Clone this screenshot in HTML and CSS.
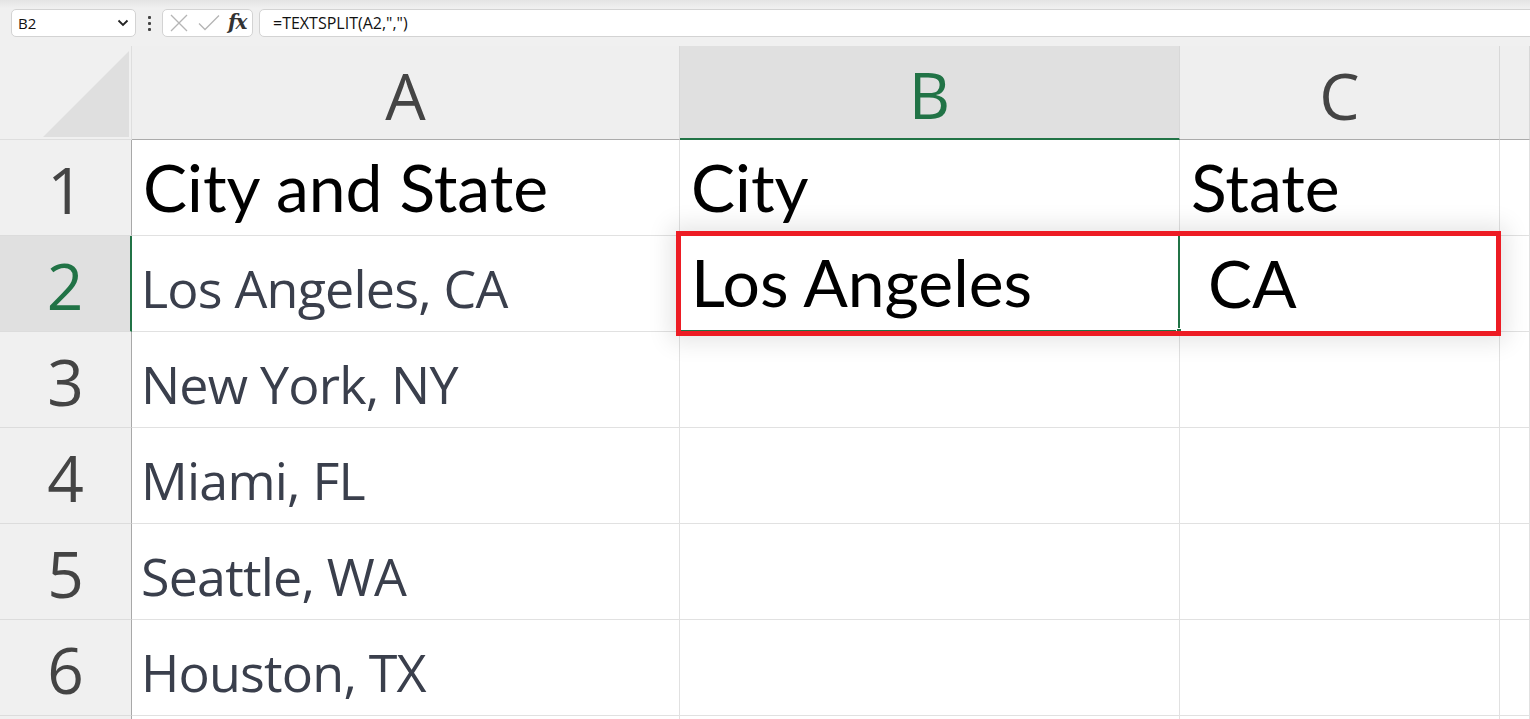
FILE: index.html
```html
<!DOCTYPE html>
<html>
<head>
<meta charset="utf-8">
<title>TEXTSPLIT</title>
<link rel="stylesheet" href="styles.css">
</head>
<body>
<div class="topbar">
  <div class="namebox">
    <span class="nb-text">B2</span>
    <svg class="chev" width="12" height="8" viewBox="0 0 12 8"><path d="M1.5 1.5 L6 6 L10.5 1.5" fill="none" stroke="#222" stroke-width="1.8"/></svg>
  </div>
  <div class="dots"><i></i><i></i><i></i></div>
  <div class="fxbox">
    <svg class="ico-x" width="18" height="18" viewBox="0 0 18 18"><path d="M1 1 L17 17 M17 1 L1 17" stroke="#b5b5b5" stroke-width="1.3" fill="none"/></svg>
    <svg class="ico-check" width="22" height="18" viewBox="0 0 22 18"><path d="M1 9.5 L7 15.5 L21 1.5" stroke="#b5b5b5" stroke-width="1.3" fill="none"/></svg>
    <span class="fx">fx</span>
  </div>
  <div class="formula">=TEXTSPLIT(A2,",")</div>
</div>

<div class="sheet">
  <div class="grid">
    <div class="corner"><svg width="86" height="86" viewBox="0 0 86 86"><polygon points="86,0 86,86 0,86" fill="#dfdfdf"/></svg></div>
    <div class="colhead">A</div>
    <div class="colhead sel">B</div>
    <div class="colhead">C</div>
    <div class="colhead"></div>

    <div class="rowhead">1</div>
    <div class="cell big">City and State</div>
    <div class="cell big">City</div>
    <div class="cell big">State</div>
    <div class="cell"></div>

    <div class="rowhead sel">2</div>
    <div class="cell soft">Los Angeles, CA</div>
    <div class="cell big active">Los Angeles<span class="handle"></span></div>
    <div class="cell big">&nbsp;CA</div>
    <div class="cell"></div>

    <div class="rowhead">3</div>
    <div class="cell soft">New York, NY</div>
    <div class="cell"></div>
    <div class="cell"></div>
    <div class="cell"></div>

    <div class="rowhead">4</div>
    <div class="cell soft">Miami, FL</div>
    <div class="cell"></div>
    <div class="cell"></div>
    <div class="cell"></div>

    <div class="rowhead">5</div>
    <div class="cell soft">Seattle, WA</div>
    <div class="cell"></div>
    <div class="cell"></div>
    <div class="cell"></div>

    <div class="rowhead">6</div>
    <div class="cell soft">Houston, TX</div>
    <div class="cell"></div>
    <div class="cell"></div>
    <div class="cell"></div>

    <div class="rowhead"></div>
    <div class="cell"></div>
    <div class="cell"></div>
    <div class="cell"></div>
    <div class="cell"></div>
  </div>
  <div class="callout"></div>
</div>
</body>
</html>
```

FILE: styles.css
```css
* { box-sizing: border-box; }
html, body { margin: 0; padding: 0; }
body {
  width: 1530px;
  height: 719px;
  overflow: hidden;
  background: #f0f0f0;
  font-family: "Open Sans", "Noto Sans", sans-serif;
}

/* ---------- formula bar ---------- */
.topbar {
  height: 46px;
  display: flex;
  align-items: center;
  padding-left: 11px;
  background: linear-gradient(#e4e4e4 0px, #f0f0f0 8px, #f0f0f0 100%);
  white-space: nowrap;
}
.namebox {
  width: 125px;
  height: 28px;
  background: #fff;
  border: 1px solid #d3d3d3;
  border-radius: 5px;
  display: flex;
  align-items: center;
  justify-content: space-between;
  padding: 0 6px 0 6px;
  color: #111;
}
.nb-text { font-family: "Open Sans", sans-serif; font-size: 15px; }
.chev { display: block; }
.dots {
  width: 26px;
  height: 28px;
  display: flex;
  flex-direction: column;
  align-items: center;
  justify-content: center;
  gap: 3px;
}
.dots i {
  display: block;
  width: 3px;
  height: 3px;
  background: #444;
  border-radius: 1px;
}
.fxbox {
  width: 91px;
  height: 28px;
  background: #fff;
  border: 1px solid #d3d3d3;
  border-radius: 5px;
  display: flex;
  align-items: center;
  padding-left: 7px;
}
.ico-x { display: block; margin-right: 10px; }
.ico-check { display: block; margin-right: 8px; }
.fx {
  font-family: "DejaVu Serif", "Liberation Serif", serif;
  font-style: italic;
  font-weight: bold;
  font-size: 20px;
  color: #333;
  letter-spacing: -1px;
  line-height: 1;
  margin-top: -2px;
}
.formula {
  flex: 1;
  height: 28px;
  margin-left: 6px;
  margin-right: -10px;
  background: #fff;
  border: 1px solid #d3d3d3;
  border-radius: 5px;
  display: flex;
  align-items: center;
  padding-left: 13px;
  font-size: 16px;
  color: #111;
}

/* ---------- sheet ---------- */
.sheet {
  position: relative;
}
.grid {
  display: grid;
  grid-template-columns: 132px 548px 500px 320px 1fr;
  grid-template-rows: 94px repeat(7, 96px);
  background: #fff;
}
.corner {
  background: #f0f0f0;
  border-right: 1px solid #dedede;
  border-bottom: 1px solid #dedede;
  display: flex;
  align-items: flex-end;
  justify-content: flex-end;
  padding: 0 2px 2px 0;
}
.corner svg { display: block; }
.colhead {
  background: #efefef;
  border-right: 1px solid #d8d8d8;
  border-bottom: 1px solid #ababab;
  display: flex;
  align-items: center;
  justify-content: center;
  font-family: "Open Sans", sans-serif;
  font-size: 64px;
  line-height: 1;
  color: #444;
  padding-top: 6px;
}
.colhead.sel {
  background: #e0e0e0;
  color: #217346;
  border-bottom: 2px solid #217346;
}
.rowhead {
  background: #f0f0f0;
  border-right: 1px solid #a8a8a8;
  border-bottom: 1px solid #dcdcdc;
  display: flex;
  align-items: center;
  justify-content: center;
  font-family: "Open Sans", sans-serif;
  font-size: 64px;
  line-height: 1;
  color: #444;
  padding-top: 4px;
}
.rowhead.sel {
  background: #e0e0e0;
  color: #217346;
  border-right: 2px solid #217346;
}
.cell {
  position: relative;
  border-right: 1px solid #e1e1e1;
  border-bottom: 1px solid #e1e1e1;
  display: flex;
  align-items: flex-end;
  white-space: nowrap;
  padding-left: 11px;
}
.big {
  font-family: "Lato", "Open Sans", sans-serif;
  font-size: 66px;
  line-height: 1;
  color: #000;
  padding-bottom: 15px;
}
.soft {
  font-family: "Open Sans", sans-serif;
  font-size: 52px;
  line-height: 1;
  color: #3a3f4c;
  padding-left: 9px;
  padding-bottom: 17px;
  letter-spacing: -0.8px;
}
.active {
  border-right: 2px solid #217346;
  border-bottom: 2px solid #217346;
}
.handle {
  position: absolute;
  right: -4px;
  bottom: -4px;
  width: 6px;
  height: 6px;
  background: #217346;
  border: 1px solid #fff;
}
.callout {
  position: absolute;
  left: 676px;
  top: 185px;
  width: 825px;
  height: 105px;
  border: 5px solid #ed1c24;
  box-shadow: 0 0 22px 6px rgba(0, 0, 0, 0.10);
  pointer-events: none;
}
```
